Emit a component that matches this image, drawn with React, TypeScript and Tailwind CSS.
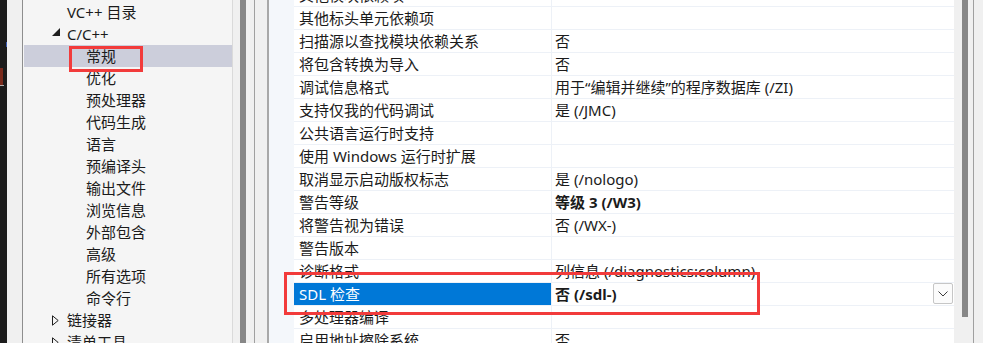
import React from "react";

const FONT = '"Noto Sans", "Noto Sans CJK SC", sans-serif';

type TreeItem = { label: string; level: 1 | 2; icon?: "open" | "closed"; selected?: boolean };

const tree: TreeItem[] = [
  { label: "VC++ 目录", level: 1 },
  { label: "C/C++", level: 1, icon: "open" },
  { label: "常规", level: 2, selected: true },
  { label: "优化", level: 2 },
  { label: "预处理器", level: 2 },
  { label: "代码生成", level: 2 },
  { label: "语言", level: 2 },
  { label: "预编译头", level: 2 },
  { label: "输出文件", level: 2 },
  { label: "浏览信息", level: 2 },
  { label: "外部包含", level: 2 },
  { label: "高级", level: 2 },
  { label: "所有选项", level: 2 },
  { label: "命令行", level: 2 },
  { label: "链接器", level: 1, icon: "closed" },
  { label: "清单工具", level: 1, icon: "closed" },
];

type Row = { name: string; value: string; bold?: boolean; selected?: boolean };

const rows: Row[] = [
  { name: "其他模块依赖项", value: "" },
  { name: "其他标头单元依赖项", value: "" },
  { name: "扫描源以查找模块依赖关系", value: "否" },
  { name: "将包含转换为导入", value: "否" },
  { name: "调试信息格式", value: "用于“编辑并继续”的程序数据库 (/ZI)" },
  { name: "支持仅我的代码调试", value: "是 (/JMC)" },
  { name: "公共语言运行时支持", value: "" },
  { name: "使用 Windows 运行时扩展", value: "" },
  { name: "取消显示启动版权标志", value: "是 (/nologo)" },
  { name: "警告等级", value: "等级 3 (/W3)", bold: true },
  { name: "将警告视为错误", value: "否 (/WX-)" },
  { name: "警告版本", value: "" },
  { name: "诊断格式", value: "列信息 (/diagnostics:column)" },
  { name: "SDL 检查", value: "否 (/sdl-)", bold: true, selected: true },
  { name: "多处理器编译", value: "" },
  { name: "启用地址擦除系统", value: "否" },
];

function OpenTri() {
  return (
    <svg width="8" height="8" viewBox="0 0 8 8" className="block">
      <path d="M8 0 L8 8 L0 8 Z" fill="#1e1e1e" />
    </svg>
  );
}

function ClosedTri() {
  return (
    <svg width="7" height="11" viewBox="0 0 7 11" className="block">
      <path d="M0.5 0.8 L6.2 5.5 L0.5 10.2 Z" fill="none" stroke="#1e1e1e" strokeWidth="1" />
    </svg>
  );
}

function Chevron() {
  return (
    <svg width="10" height="6" viewBox="0 0 10 6" className="block">
      <path d="M0.5 0.5 L5 5 L9.5 0.5" fill="none" stroke="#3c3c3c" strokeWidth="1" />
    </svg>
  );
}

export default function App() {
  return (
    <div
      className="relative flex h-[343px] w-[983px] overflow-hidden bg-[#f0f0f0] text-[15px] text-[#1b1b1b]"
      style={{ fontFamily: FONT }}
    >
      {/* dark window edge */}
      <div className="relative w-[7px] shrink-0 bg-[#1c1c1c]">
        <div className="absolute left-[6px] top-[42px] h-[5px] w-px bg-[#3b5cb5]" />
        <div className="absolute left-0 top-[68px] h-[17px] w-[3px] bg-[#7a2a1c]" />
        <div className="absolute left-0 top-[85px] h-px w-[4px] bg-[#b0b0b0]" />
      </div>
      <div className="w-[15px] shrink-0 bg-[#f0f0f0]" />
      <div className="w-px shrink-0 bg-[#8e8e8e]" />

      {/* tree */}
      <div className="flex w-[209px] shrink-0 flex-col bg-[#f5f5f5] pl-px pt-px">
        {tree.map((t) => (
          <div
            key={t.label}
            className={`flex h-[22px] shrink-0 items-center leading-[22px] ${t.selected ? "bg-[#cccedb]" : ""}`}
          >
            {t.level === 1 ? (
              <>
                <div className="flex w-[43px] shrink-0 justify-start pl-[27px]">
                  {t.icon === "open" && (
                    <div className="-mt-[4px] pl-px">
                      <OpenTri />
                    </div>
                  )}
                  {t.icon === "closed" && (
                    <div className="pl-[1px]">
                      <ClosedTri />
                    </div>
                  )}
                </div>
                <span className="whitespace-nowrap">{t.label}</span>
              </>
            ) : (
              <>
                <div className="w-[62px] shrink-0" />
                <span className="whitespace-nowrap">{t.label}</span>
              </>
            )}
          </div>
        ))}
      </div>

      <div className="w-px shrink-0 bg-[#dadada]" />
      <div className="w-[7px] shrink-0" />
      <div className="w-[6px] shrink-0 bg-[#878787]" />
      <div className="w-[8px] shrink-0" />
      <div className="w-px shrink-0 bg-[#a0a0a0]" />
      <div className="w-[12px] shrink-0" />
      <div className="w-[2px] shrink-0 bg-[#a8a8a8]" />
      <div className="w-[25px] shrink-0 bg-[#f4f7fb]" />

      {/* property grid */}
      <div className="flex w-[660px] shrink-0 flex-col bg-white">
        <div className="-mt-[16px] flex flex-col">
          {rows.map((r) => (
            <div key={r.name} className="flex h-[23px] shrink-0 border-b border-[#edf1f7]">
              <div
                className={`flex w-[258px] shrink-0 items-center border-r border-[#edf1f7] pl-[5px] leading-[22px] whitespace-nowrap ${
                  r.selected ? "bg-[#0078d7] text-white" : ""
                }`}
              >
                {r.name}
              </div>
              <div className="relative flex flex-1 items-center pl-[3px] leading-[22px] whitespace-nowrap">
                <span className={r.bold ? "font-bold" : ""}>{r.value}</span>
                {r.selected && (
                  <div className="absolute right-px top-0 flex h-[21px] w-[20px] items-center justify-center rounded-[2px] border border-[#c6c6c6] bg-[#fbfbfb]">
                    <Chevron />
                  </div>
                )}
              </div>
            </div>
          ))}
        </div>
      </div>

      <div className="w-[8px] shrink-0" />
      <div className="flex w-[6px] shrink-0 flex-col">
        <div className="h-[317px] bg-[#878787]" />
      </div>
      <div className="w-[5px] shrink-0" />
      <div className="w-px shrink-0 bg-[#a0a0a0]" />
      <div className="flex-1" />

      {/* red highlight boxes */}
      <div className="pointer-events-none absolute left-[69px] top-[46px] h-[26px] w-[74px] border-[3px] border-[#f23b3b]" />
      <div className="pointer-events-none absolute left-[284px] top-[272px] h-[43px] w-[476px] border-[3px] border-[#f23b3b]" />
    </div>
  );
}
